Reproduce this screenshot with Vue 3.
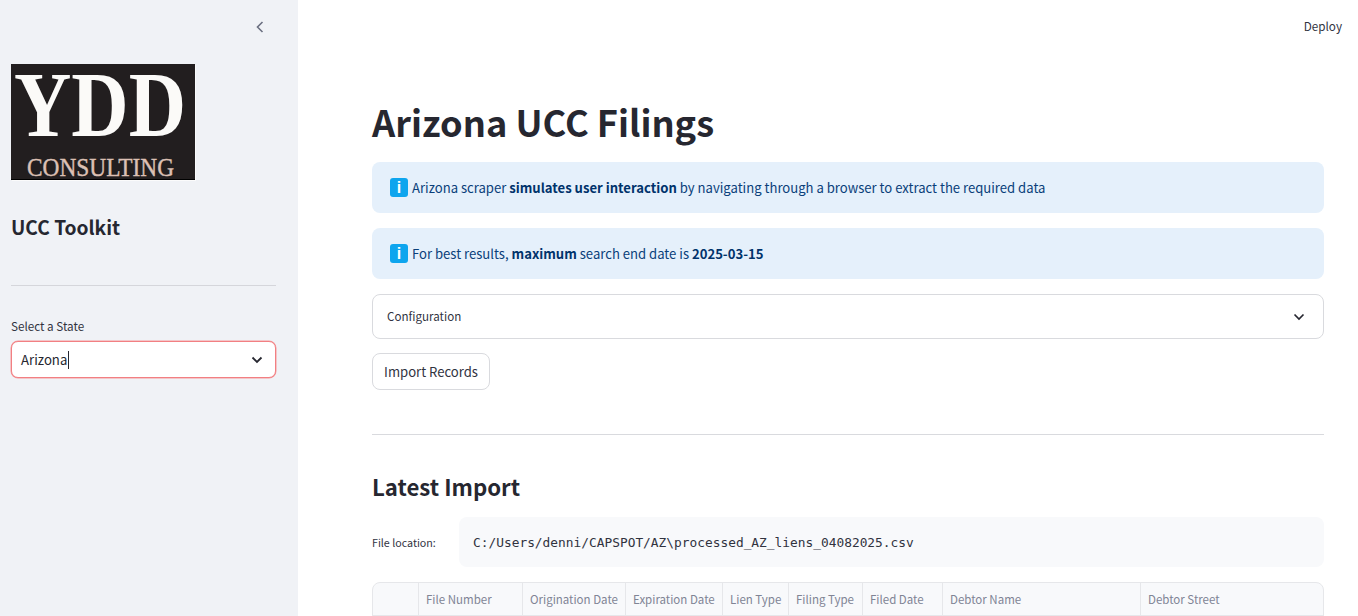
<script setup>
const columns = [
  { label: '', width: 46 },
  { label: 'File Number', width: 104 },
  { label: 'Origination Date', width: 103 },
  { label: 'Expiration Date', width: 97 },
  { label: 'Lien Type', width: 66 },
  { label: 'Filing Type', width: 74 },
  { label: 'Filed Date', width: 80 },
  { label: 'Debtor Name', width: 198 },
  { label: 'Debtor Street', width: 184 }
]
</script>

<template>
  <div class="app">
    <aside class="sidebar">
      <div class="collapse-row">
        <svg class="chevron-left" width="12" height="14" viewBox="0 0 12 14" fill="none">
          <path d="M8.5 2 L3.5 7 L8.5 12" stroke="#6b6f80" stroke-width="1.6" />
        </svg>
      </div>
      <svg class="logo" width="184" height="116" viewBox="0 0 184 116">
        <rect width="184" height="116" fill="#221e1f" />
        <rect y="115" width="184" height="1" fill="#000" />
        <text x="3" y="72" class="logo-main" textLength="172" lengthAdjust="spacingAndGlyphs">YDD</text>
        <text x="16" y="112" class="logo-sub" textLength="147" lengthAdjust="spacingAndGlyphs">CONSULTING</text>
      </svg>
      <h3 class="side-title">UCC Toolkit</h3>
      <hr class="side-rule" />
      <label class="side-label">Select a State</label>
      <div class="select">
        <span>Arizona</span><span class="caret"></span>
        <svg class="chevron-down sel-chev" width="12" height="8" viewBox="0 0 12 8" fill="none">
          <path d="M1.5 1.5 L6 6 L10.5 1.5" stroke="#262730" stroke-width="1.8" />
        </svg>
      </div>
    </aside>

    <main class="main">
      <div class="deploy-row"><span class="deploy">Deploy</span></div>
      <h1 class="title">Arizona UCC Filings</h1>

      <div class="alert">
        <span class="info-icon">i</span>
        <span>Arizona scraper <b>simulates user interaction</b> by navigating through a browser to extract the required data</span>
      </div>
      <div class="alert">
        <span class="info-icon">i</span>
        <span>For best results, <b>maximum</b> search end date is <b>2025-03-15</b></span>
      </div>

      <div class="expander">
        <span class="expander-label">Configuration</span>
        <svg width="12" height="8" viewBox="0 0 12 8" fill="none">
          <path d="M1.5 1.5 L6 6 L10.5 1.5" stroke="#262730" stroke-width="1.7" />
        </svg>
      </div>

      <button class="button">Import Records</button>

      <hr class="main-rule" />

      <h2 class="subtitle">Latest Import</h2>

      <div class="file-row">
        <span class="file-label">File location:</span>
        <code class="code">C:/Users/denni/CAPSPOT/AZ\processed_AZ_liens_04082025.csv</code>
      </div>

      <div class="table">
        <div
          v-for="col in columns"
          :key="col.label"
          class="th"
          :style="{ width: col.width + 'px' }"
        >{{ col.label }}</div>
      </div>
    </main>
  </div>
</template>

<style>
html, body { margin: 0; height: 616px; overflow: hidden; background: #fff; }
</style>

<style scoped>
.app {
  display: flex;
  width: 1358px;
  height: 616px;
  overflow: hidden;
  font-family: "Noto Sans CJK SC", "Noto Sans", sans-serif;
  color: #262730;
}
.sidebar {
  width: 298px;
  flex: none;
  box-sizing: border-box;
  background: #f0f2f6;
  padding: 0 22px 0 11px;
}
.collapse-row {
  display: flex;
  justify-content: flex-end;
  height: 64px;
  padding: 20px 10px 0 0;
  box-sizing: border-box;
}
.logo {
  display: block;
  overflow: visible;
  box-shadow: 1px 1px 0 #fbfbfb;
}
.logo-main {
  fill: #fbfaf8;
  font-family: "Liberation Serif", serif;
  font-size: 94px;
  font-weight: 700;
}
.logo-sub {
  fill: #dcc0b4;
  stroke: #dcc0b4;
  stroke-width: 0.4px;
  font-family: "Liberation Serif", serif;
  font-size: 25px;
}
.side-title {
  margin: 32px 0 0;
  font-size: 19.2px;
  line-height: 30px;
  font-weight: 600;
  color: #262730;
}
.side-rule {
  margin: 43px 0 0;
  border: 0;
  border-top: 1px solid #d5d6db;
}
.side-label {
  display: block;
  margin-top: 32px;
  font-size: 11.7px;
  line-height: 16px;
  color: #31333f;
}
.select {
  position: relative;
  margin-top: 7px;
  height: 37px;
  box-sizing: border-box;
  display: flex;
  align-items: center;
  padding-left: 9px;
  background: #fff;
  border: 1px solid #f27f82;
  box-shadow: 0 0 0 0.5px #f59a9c;
  border-radius: 7px;
  font-size: 13.2px;
}
.caret {
  display: inline-block;
  width: 1px;
  height: 18px;
  background: #262730;
  margin-left: 1px;
}
.sel-chev { position: absolute; right: 12px; top: 14px; }
.main {
  flex: 1;
  min-width: 0;
  box-sizing: border-box;
  padding: 0 34px 0 74px;
}
.deploy-row {
  display: flex;
  justify-content: flex-end;
  height: 52px;
  padding-top: 16px;
  margin-right: -18px;
  box-sizing: border-box;
}
.deploy { font-size: 11.7px; line-height: 20px; color: #31333f; }
.title {
  margin: 42px 0 0;
  font-size: 36.2px;
  line-height: 54px;
  font-weight: 700;
  color: #262730;
}
.alert {
  display: flex;
  align-items: center;
  height: 51px;
  margin-top: 14px;
  box-sizing: border-box;
  padding-left: 18px;
  background: #e5f0fb;
  border-radius: 8px;
  font-size: 13.1px;
  color: #0a3f7a;
}
.alert + .alert { margin-top: 15px; }
.alert b { font-weight: 700; color: #00336b; }
.info-icon {
  width: 18px;
  height: 19px;
  margin-right: 4px;
  flex: none;
  border-radius: 3px;
  background: #0ea5ee;
  color: #fff;
  font-family: "Liberation Sans", sans-serif;
  font-weight: 700;
  font-size: 16px;
  line-height: 19px;
  text-align: center;
}
.expander {
  display: flex;
  align-items: center;
  justify-content: space-between;
  height: 45px;
  margin-top: 15px;
  box-sizing: border-box;
  padding: 0 18px 0 14px;
  border: 1px solid #d9dade;
  border-radius: 8px;
  font-size: 11.6px;
  color: #31333f;
}
.expander-label { margin-top: -2px; }
.button {
  display: block;
  width: 118px;
  height: 37px;
  margin-top: 14px;
  padding: 0;
  background: #fff;
  border: 1px solid #d9dade;
  border-radius: 8px;
  font-family: inherit;
  font-size: 13.1px;
  color: #31333f;
}
.main-rule {
  margin: 44px 0 0;
  border: 0;
  border-top: 1px solid #d9dade;
}
.subtitle {
  margin: 34px 0 0;
  font-size: 22.2px;
  line-height: 34px;
  font-weight: 600;
  color: #262730;
}
.file-row {
  display: flex;
  align-items: center;
  margin-top: 14px;
}
.file-label {
  width: 87px;
  flex: none;
  font-size: 10.7px;
  color: #31333f;
}
.code {
  flex: 1;
  height: 50px;
  box-sizing: border-box;
  padding: 0 14px;
  display: flex;
  align-items: center;
  background: #f8f9fb;
  border-radius: 8px;
  font-family: "DejaVu Sans Mono", "Liberation Mono", monospace;
  font-size: 12.85px;
  color: #31333f;
}
.table {
  display: flex;
  height: 36px;
  margin-top: 15px;
  box-sizing: border-box;
  border: 1px solid #e6e7ea;
  border-radius: 8px 8px 0 0;
  background: #f8f9fb;
  overflow: hidden;
}
.th {
  flex: none;
  box-sizing: border-box;
  height: 33px;
  line-height: 33px;
  padding-left: 7px;
  border-right: 1px solid #e6e7ea;
  border-bottom: 1px solid #e6e7ea;
  font-size: 11.5px;
  color: #808495;
  white-space: nowrap;
  overflow: hidden;
}
.th:last-child { border-right: 0; flex: 1; }
</style>
